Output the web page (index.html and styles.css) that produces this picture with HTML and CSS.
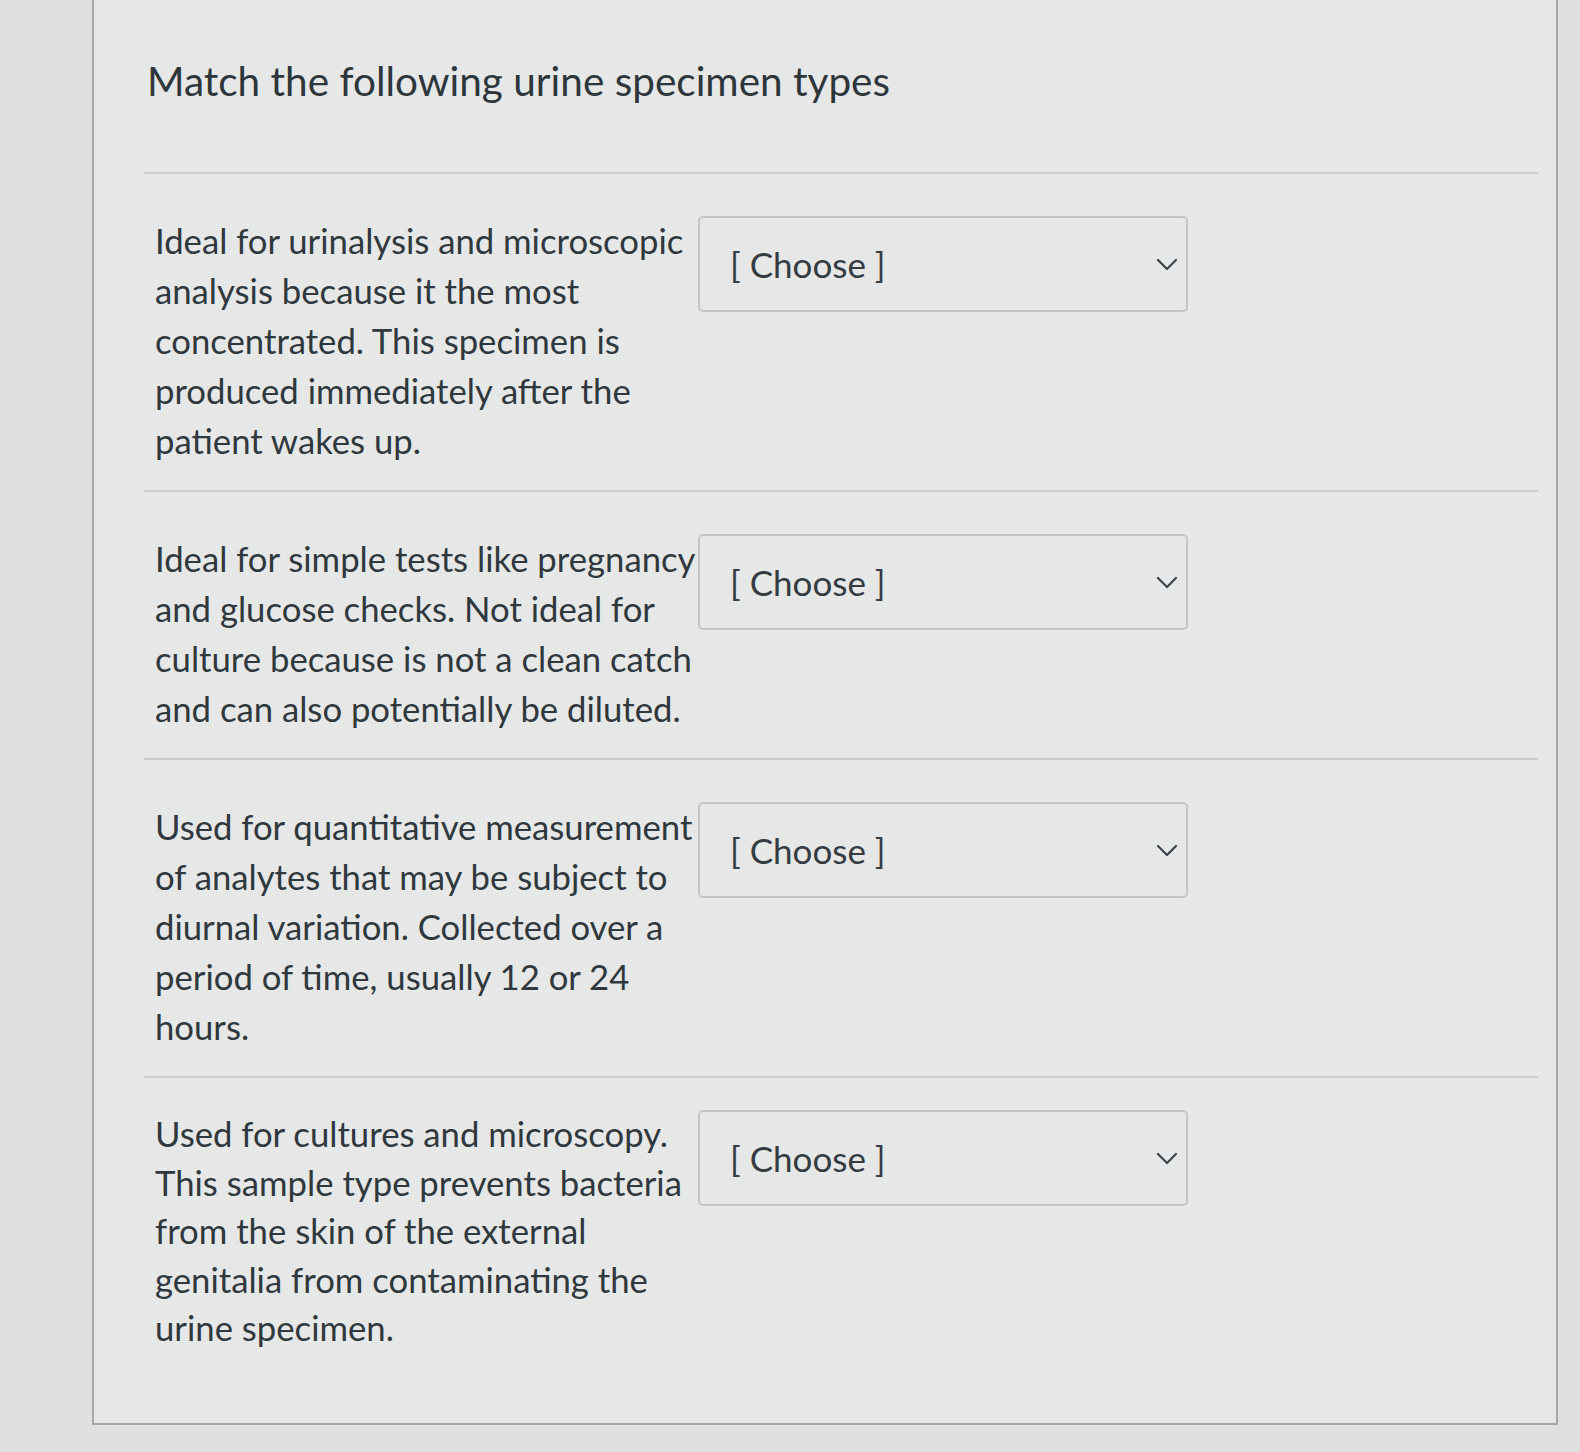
FILE: index.html
```html
<!DOCTYPE html>
<html lang="en">
<head>
<meta charset="utf-8">
<title>Match the following urine specimen types</title>
<link rel="stylesheet" href="styles.css">
</head>
<body>
<div class="page">
  <div class="card">
    <h1 class="title">Match the following urine specimen types</h1>
    <div class="rows">
      <div class="row">
        <div class="prompt">Ideal for urinalysis and microscopic analysis because it the most concentrated. This specimen is produced immediately after the patient wakes up.</div>
        <div class="select"><span class="select-text">[ Choose ]</span><svg class="chev" viewBox="0 0 22 13" width="22" height="13"><path d="M2 2 L11 11 L20 2" fill="none" stroke="#3a444a" stroke-width="2.2" stroke-linecap="round" stroke-linejoin="round"/></svg></div>
      </div>
      <div class="row">
        <div class="prompt">Ideal for simple tests like pregnancy and glucose checks. Not ideal for culture because is not a clean catch and can also potentially be diluted.</div>
        <div class="select"><span class="select-text">[ Choose ]</span><svg class="chev" viewBox="0 0 22 13" width="22" height="13"><path d="M2 2 L11 11 L20 2" fill="none" stroke="#3a444a" stroke-width="2.2" stroke-linecap="round" stroke-linejoin="round"/></svg></div>
      </div>
      <div class="row">
        <div class="prompt">Used for quantitative measurement of analytes that may be subject to diurnal variation. Collected over a period of time, usually 12 or 24 hours.</div>
        <div class="select"><span class="select-text">[ Choose ]</span><svg class="chev" viewBox="0 0 22 13" width="22" height="13"><path d="M2 2 L11 11 L20 2" fill="none" stroke="#3a444a" stroke-width="2.2" stroke-linecap="round" stroke-linejoin="round"/></svg></div>
      </div>
      <div class="row row-last">
        <div class="prompt">Used for cultures and microscopy. This sample type prevents bacteria from the skin of the external genitalia from contaminating the urine specimen.</div>
        <div class="select"><span class="select-text">[ Choose ]</span><svg class="chev" viewBox="0 0 22 13" width="22" height="13"><path d="M2 2 L11 11 L20 2" fill="none" stroke="#3a444a" stroke-width="2.2" stroke-linecap="round" stroke-linejoin="round"/></svg></div>
      </div>
    </div>
  </div>
</div>
</body>
</html>
```

FILE: styles.css
```css
html, body {
  margin: 0;
  padding: 0;
}
body {
  background: #dfe0e0;
  font-family: Lato, "Open Sans", sans-serif;
  color: #2f3a40;
  width: 1580px;
  height: 1452px;
  overflow: hidden;
}
.page {
  padding-left: 92px;
}
.card {
  width: 1466px;
  background: #e6e7e7;
  border-left: 2px solid #a4a7a8;
  border-right: 2px solid #a4a7a8;
  border-bottom: 2px solid #a4a7a8;
  padding: 0 18px 46px 50px;
  box-sizing: border-box;
}
.title {
  margin: 0;
  padding-top: 56px;
  padding-bottom: 66px;
  font-size: 40.5px;
  line-height: 50px;
  font-weight: 400;
  color: #2d363b;
  padding-left: 3px;
  border-bottom: 2px solid #c9cccd;
}
.row {
  display: flex;
  align-items: flex-start;
  padding: 42px 0 24px 11px;
  border-bottom: 2px solid #c9cccd;
}
.row-last {
  border-bottom: none;
  padding-top: 32px;
}
.row-last .prompt {
  line-height: 48.5px;
}
.prompt {
  width: 543px;
  font-size: 34.7px;
  line-height: 50px;
  color: #2f383d;
}
.select {
  width: 490px;
  height: 96px;
  box-sizing: border-box;
  border: 2px solid #c3c6c7;
  border-radius: 5px;
  display: flex;
  align-items: center;
  justify-content: space-between;
  padding: 0 8px 0 30px;
}
.select-text {
  font-size: 35px;
  color: #343c41;
}
.chev {
  display: block;
}
```
